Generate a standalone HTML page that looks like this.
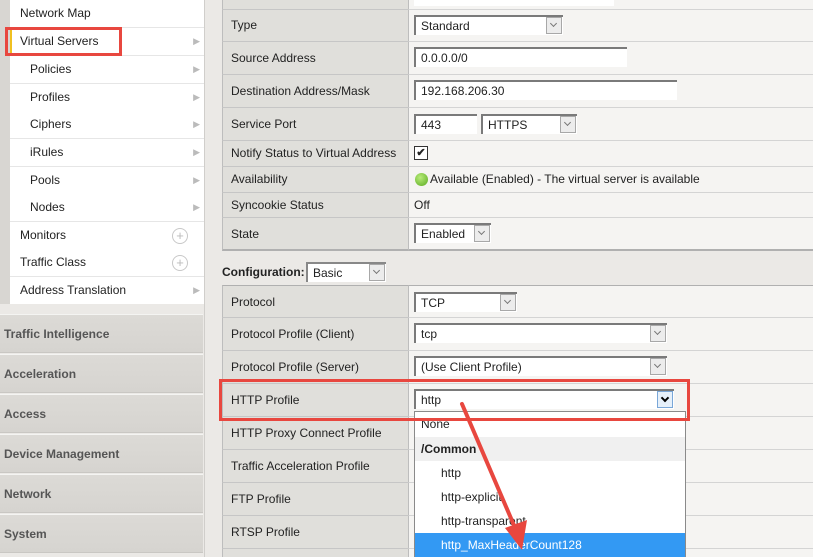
<!DOCTYPE html><html><head><style>
html,body{margin:0;width:813px;height:557px;overflow:hidden}
body{background:#ebe9e6;font-family:"Liberation Sans",Arial,sans-serif;font-size:12px;color:#222;position:relative}
.a{position:absolute}
.ni{position:absolute;left:10px;width:194px;height:27px;border-bottom:1px solid #e6e6e6;line-height:27px;background:#fff}
.ni span{position:absolute;left:10px}
.ni.s span{left:20px}
.ni i{position:absolute;right:4px;top:0;color:#bbb;font-style:normal;font-size:9px}
.ni b{position:absolute;right:16px;top:6px;width:14px;height:14px;border:1px solid #c8c8c8;border-radius:50%;font-weight:normal;color:#bbb;line-height:14px;text-align:center;font-size:13px}
.sec{position:absolute;left:0;width:203px;height:39px;background:linear-gradient(#dcdad6,#d6d4d0);border-top:1px solid #f4f4f2;border-bottom:1px solid #c9c7c3;font-weight:bold;color:#555;line-height:39px;padding-left:4px;box-sizing:border-box}
.l{position:absolute;left:222px;width:186px;background:#e0dfdb;border-bottom:1px solid #c6c6c6;border-left:1px solid #bdbdbd;box-sizing:border-box;padding-left:8px}
.v{position:absolute;left:408px;width:405px;background:#f5f4f2;border-bottom:1px solid #d4d4d4;border-left:1px solid #bdbdbd;box-sizing:border-box}
.in{position:absolute;background:#fff;border-top:2px solid #7a7a7a;border-left:2px solid #7a7a7a;box-sizing:border-box;height:20px;line-height:18px;padding-left:5px}
.bt{position:absolute;right:1px;top:0;width:16px;height:17px;border:1px solid #a8a8a8;background:#ececec;box-sizing:border-box}
.bt::after{content:"";position:absolute;left:4px;top:3px;width:4px;height:4px;border-right:1.5px solid #777;border-bottom:1.5px solid #777;transform:rotate(45deg)}
.bt.h{background:#e6f0fa;border-color:#7aa7d8}
.bt.h::after{border-color:#000;border-width:2px}
</style></head><body>
<div class="a" style="left:0;top:0;width:10px;height:304px;background:#d8d6d2"></div>
<div class="a" style="left:204px;top:0;width:1px;height:557px;background:#d0cecb"></div>
<div class="ni"><span>Network Map</span></div>
<div class="ni" style="top:28px"><div class="a" style="left:0;top:0;width:2px;height:27px;background:#f0c020"></div><span>Virtual Servers</span><i>▶</i></div>
<div class="ni s" style="top:56px"><span>Policies</span><i>▶</i></div>
<div class="ni s" style="top:84px"><span>Profiles</span><i>▶</i></div>
<div class="ni s" style="top:111px"><span>Ciphers</span><i>▶</i></div>
<div class="ni s" style="top:139px"><span>iRules</span><i>▶</i></div>
<div class="ni s" style="top:167px"><span>Pools</span><i>▶</i></div>
<div class="ni s" style="top:194px"><span>Nodes</span><i>▶</i></div>
<div class="ni" style="top:222px"><span>Monitors</span><b>+</b></div>
<div class="ni" style="top:249px"><span>Traffic Class</span><b>+</b></div>
<div class="ni" style="top:277px;border-bottom:none"><span>Address Translation</span><i>▶</i></div>
<div class="a" style="left:5px;top:27px;width:117px;height:29px;border:3px solid #e8473f;box-sizing:border-box"></div>
<div class="sec" style="top:314px">Traffic Intelligence</div>
<div class="sec" style="top:354px">Acceleration</div>
<div class="sec" style="top:394px">Access</div>
<div class="sec" style="top:434px">Device Management</div>
<div class="sec" style="top:474px">Network</div>
<div class="sec" style="top:514px">System</div>

<div class="l" style="top:0;height:10px"></div><div class="v" style="top:0;height:10px"><div class="a" style="left:5px;top:0;width:200px;height:6px;background:#fff"></div></div>
<div class="l" style="top:10px;height:32px;line-height:31px">Type</div><div class="v" style="top:10px;height:32px"><div class="in" style="left:5px;top:5px;width:149px">Standard<div class="bt"></div></div></div>
<div class="l" style="top:42px;height:33px;line-height:32px">Source Address</div><div class="v" style="top:42px;height:33px"><div class="in" style="left:5px;top:5px;width:213px">0.0.0.0/0</div></div>
<div class="l" style="top:75px;height:33px;line-height:32px">Destination Address/Mask</div><div class="v" style="top:75px;height:33px"><div class="in" style="left:5px;top:5px;width:263px">192.168.206.30</div></div>
<div class="l" style="top:108px;height:33px;line-height:32px">Service Port</div><div class="v" style="top:108px;height:33px"><div class="in" style="left:5px;top:6px;width:63px">443</div><div class="in" style="left:72px;top:6px;width:96px">HTTPS<div class="bt"></div></div></div>
<div class="l" style="top:141px;height:26px;line-height:25px">Notify Status to Virtual Address</div><div class="v" style="top:141px;height:26px"><div class="a" style="left:5px;top:5px;width:14px;height:14px;border:1px solid #333;background:#fff;box-sizing:border-box;font-size:11px;line-height:12px;text-align:center;font-weight:bold">✔</div></div>
<div class="l" style="top:167px;height:26px;line-height:25px">Availability</div><div class="v" style="top:167px;height:26px;line-height:25px"><span class="a" style="left:6px;top:6px;width:13px;height:13px;border-radius:50%;background:radial-gradient(circle at 40% 35%,#b8ec7a,#5aaa20)"></span><span style="padding-left:21px">Available (Enabled) - The virtual server is available</span></div>
<div class="l" style="top:193px;height:25px;line-height:24px">Syncookie Status</div><div class="v" style="top:193px;height:25px;line-height:24px;padding-left:5px">Off</div>
<div class="l" style="top:218px;height:33px;line-height:32px;border-bottom:2px solid #b0b0b0">State</div><div class="v" style="top:218px;height:33px;border-bottom:2px solid #b0b0b0"><div class="in" style="left:5px;top:5px;width:77px">Enabled<div class="bt"></div></div></div>

<div class="a" style="left:222px;top:265px;font-weight:bold">Configuration:</div>
<div class="in" style="left:306px;top:262px;width:80px;border-color:#888">Basic<div class="bt"></div></div>

<div class="l" style="top:285px;height:33px;line-height:32px;border-top:1px solid #b0b0b0">Protocol</div><div class="v" style="top:285px;height:33px;border-top:1px solid #b0b0b0"><div class="in" style="left:5px;top:6px;width:103px">TCP<div class="bt"></div></div></div>
<div class="l" style="top:318px;height:33px;line-height:32px">Protocol Profile (Client)</div><div class="v" style="top:318px;height:33px"><div class="in" style="left:5px;top:5px;width:253px">tcp<div class="bt"></div></div></div>
<div class="l" style="top:351px;height:33px;line-height:32px">Protocol Profile (Server)</div><div class="v" style="top:351px;height:33px"><div class="in" style="left:5px;top:5px;width:253px">(Use Client Profile)<div class="bt"></div></div></div>
<div class="l" style="top:384px;height:33px;line-height:32px">HTTP Profile</div><div class="v" style="top:384px;height:33px"><div class="in" style="left:5px;top:5px;width:260px">http<div class="bt h"></div></div></div>
<div class="l" style="top:417px;height:33px;line-height:32px">HTTP Proxy Connect Profile</div><div class="v" style="top:417px;height:33px"></div>
<div class="l" style="top:450px;height:33px;line-height:32px">Traffic Acceleration Profile</div><div class="v" style="top:450px;height:33px"></div>
<div class="l" style="top:483px;height:33px;line-height:32px">FTP Profile</div><div class="v" style="top:483px;height:33px"></div>
<div class="l" style="top:516px;height:33px;line-height:32px">RTSP Profile</div><div class="v" style="top:516px;height:33px"></div>
<div class="l" style="top:549px;height:10px"></div><div class="v" style="top:549px;height:10px"></div>

<div class="a" style="left:414px;top:411px;width:272px;height:150px;background:#fff;border:1px solid #8a8a8a;box-sizing:border-box">
<div class="a" style="left:6px;top:5px">None</div>
<div class="a" style="left:0;top:25px;width:270px;height:24px;background:#f0f0f0;line-height:24px;font-weight:bold;padding-left:6px;box-sizing:border-box">/Common</div>
<div class="a" style="left:26px;top:54px">http</div>
<div class="a" style="left:26px;top:78px">http-explicit</div>
<div class="a" style="left:26px;top:102px">http-transparent</div>
<div class="a" style="left:0;top:121px;width:270px;height:25px;background:#3399f3;color:#fff;line-height:25px;padding-left:26px;box-sizing:border-box">http_MaxHeaderCount128</div>
</div>
<div class="a" style="left:219px;top:379px;width:471px;height:42px;border:3px solid #e8473f;box-sizing:border-box"></div>
<svg class="a" style="left:0;top:0" width="813" height="557"><line x1="462" y1="404" x2="516" y2="530" stroke="#e8473f" stroke-width="4" stroke-linecap="round"/><polygon points="522,550 505,528 527,520" fill="#e8473f"/></svg>
</body></html>
